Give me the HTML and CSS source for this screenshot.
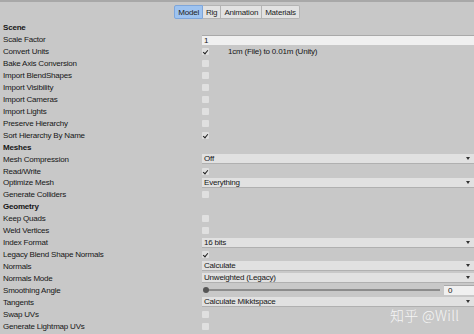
FILE: index.html
```html
<!doctype html>
<html lang="en">
<head>
    <meta charset="UTF-8">
    <title>Model Import Settings</title>
    <link rel="stylesheet" href="styles.css">
</head>
<body>
<div class="inspector">
    <!-- tabs -->
    <div class="tabs">
        <span class="tab active">Model</span>
        <span class="tab">Rig</span>
        <span class="tab">Animation</span>
        <span class="tab">Materials</span>
    </div>

    <div class="rows">
        <div class="row head"><span class="label">Scene</span></div>
        <div class="row"><span class="label">Scale Factor</span><div class="field text">1</div></div>
        <div class="row"><span class="label">Convert Units</span><div class="ctl"><span class="check on"></span><span class="note">1cm (File) to 0.01m (Unity)</span></div></div>
        <div class="row"><span class="label">Bake Axis Conversion</span><div class="ctl"><span class="check"></span></div></div>
        <div class="row"><span class="label">Import BlendShapes</span><div class="ctl"><span class="check"></span></div></div>
        <div class="row"><span class="label">Import Visibility</span><div class="ctl"><span class="check"></span></div></div>
        <div class="row"><span class="label">Import Cameras</span><div class="ctl"><span class="check"></span></div></div>
        <div class="row"><span class="label">Import Lights</span><div class="ctl"><span class="check"></span></div></div>
        <div class="row"><span class="label">Preserve Hierarchy</span><div class="ctl"><span class="check"></span></div></div>
        <div class="row"><span class="label">Sort Hierarchy By Name</span><div class="ctl"><span class="check on"></span></div></div>

        <div class="row head"><span class="label">Meshes</span></div>
        <div class="row"><span class="label">Mesh Compression</span><div class="field drop">Off</div></div>
        <div class="row"><span class="label">Read/Write</span><div class="ctl"><span class="check on"></span></div></div>
        <div class="row"><span class="label">Optimize Mesh</span><div class="field drop">Everything</div></div>
        <div class="row"><span class="label">Generate Colliders</span><div class="ctl"><span class="check"></span></div></div>

        <div class="row head"><span class="label">Geometry</span></div>
        <div class="row"><span class="label">Keep Quads</span><div class="ctl"><span class="check"></span></div></div>
        <div class="row"><span class="label">Weld Vertices</span><div class="ctl"><span class="check"></span></div></div>
        <div class="row"><span class="label">Index Format</span><div class="field drop">16 bits</div></div>
        <div class="row"><span class="label">Legacy Blend Shape Normals</span><div class="ctl"><span class="check on"></span></div></div>
        <div class="row"><span class="label">Normals</span><div class="field drop">Calculate</div></div>
        <div class="row"><span class="label">Normals Mode</span><div class="field drop">Unweighted (Legacy)</div></div>
        <div class="row"><span class="label">Smoothing Angle</span>
            <div class="slider">
                <div class="track"><span class="knob"></span></div>
                <div class="field text num">0</div>
            </div>
        </div>
        <div class="row"><span class="label">Tangents</span><div class="field drop">Calculate Mikktspace</div></div>
        <div class="row"><span class="label">Swap UVs</span><div class="ctl"><span class="check"></span></div></div>
        <div class="row"><span class="label">Generate Lightmap UVs</span><div class="ctl"><span class="check"></span></div></div>
    </div>

    <!-- watermark -->
    <div class="mark">知乎 @Will</div>
</div>
</body>
</html>
```
FILE: styles.css
```css
* {
    margin: 0;
    padding: 0;
    box-sizing: border-box;
}

body {
    background: #c8c8c8;
    font-family: "Liberation Sans", "Noto Sans CJK SC", sans-serif;
    font-size: 8px;
    letter-spacing: -0.2px;
    color: #161616;
    overflow: hidden;
}

.inspector {
    position: relative;
    width: 474px;
    height: 334px;
    border-top: 2px solid #a8a8a8;
}

/* tabs */
.tabs {
    display: flex;
    justify-content: center;
    padding-top: 3px;
    height: 20px;
}

.tab {
    height: 14px;
    line-height: 13px;
    padding: 0 3px;
    background: #e2e2e2;
    border: 1px solid #b4b4b4;
    border-left: 0;
    color: #222;
}

.tab:first-child {
    border-left: 1px solid #b4b4b4;
    border-radius: 2px 0 0 2px;
}

.tab:last-child {
    border-radius: 0 2px 2px 0;
}

.tab.active {
    background: #9ec3f0;
    border-color: #7ea6da;
}

/* rows */
.rows {
    padding-left: 3px;
}

.row {
    display: grid;
    grid-template-columns: 199px 1fr;
    align-items: center;
    height: 11.93px;
    white-space: nowrap;
}

.head .label {
    font-weight: bold;
}

.ctl {
    display: flex;
    align-items: center;
}

.check {
    position: relative;
    width: 7px;
    height: 7px;
    background: #e0e0e0;
    border-radius: 1px;
}

.check.on::after {
    content: "";
    position: absolute;
    left: 2px;
    top: 1px;
    width: 2px;
    height: 4px;
    border: solid #222;
    border-width: 0 1px 1px 0;
    transform: rotate(40deg);
}

.note {
    margin-left: 19px;
}

.field {
    height: 10px;
    line-height: 10px;
    padding-left: 2px;
}

.field.text {
    background: #f0f0f0;
    border-top: 1px solid #a9a9a9;
    line-height: 9px;
}

.field.drop {
    position: relative;
    background: #e1e1e1;
    border-bottom: 1px solid #b0b0b0;
    line-height: 9px;
}

.field.drop::after {
    content: "";
    position: absolute;
    right: 4px;
    top: 3px;
    border-left: 2px solid transparent;
    border-right: 2px solid transparent;
    border-top: 3px solid #333;
}

.slider {
    display: flex;
    align-items: center;
    gap: 4px;
}

.track {
    position: relative;
    flex: 1;
    height: 2px;
    margin-left: 2px;
    background: #8c8c8c;
}

.knob {
    position: absolute;
    left: -1px;
    top: -2px;
    width: 6px;
    height: 6px;
    border-radius: 50%;
    background: #555;
}

.num {
    width: 30px;
    padding-left: 4px;
}

/* watermark */
.mark {
    position: absolute;
    left: 390px;
    top: 303px;
    font-family: "Noto Sans CJK SC", sans-serif;
    font-size: 14px;
    font-weight: 300;
    color: rgba(255, 255, 255, 0.85);
    letter-spacing: 0.3px;
}
```
